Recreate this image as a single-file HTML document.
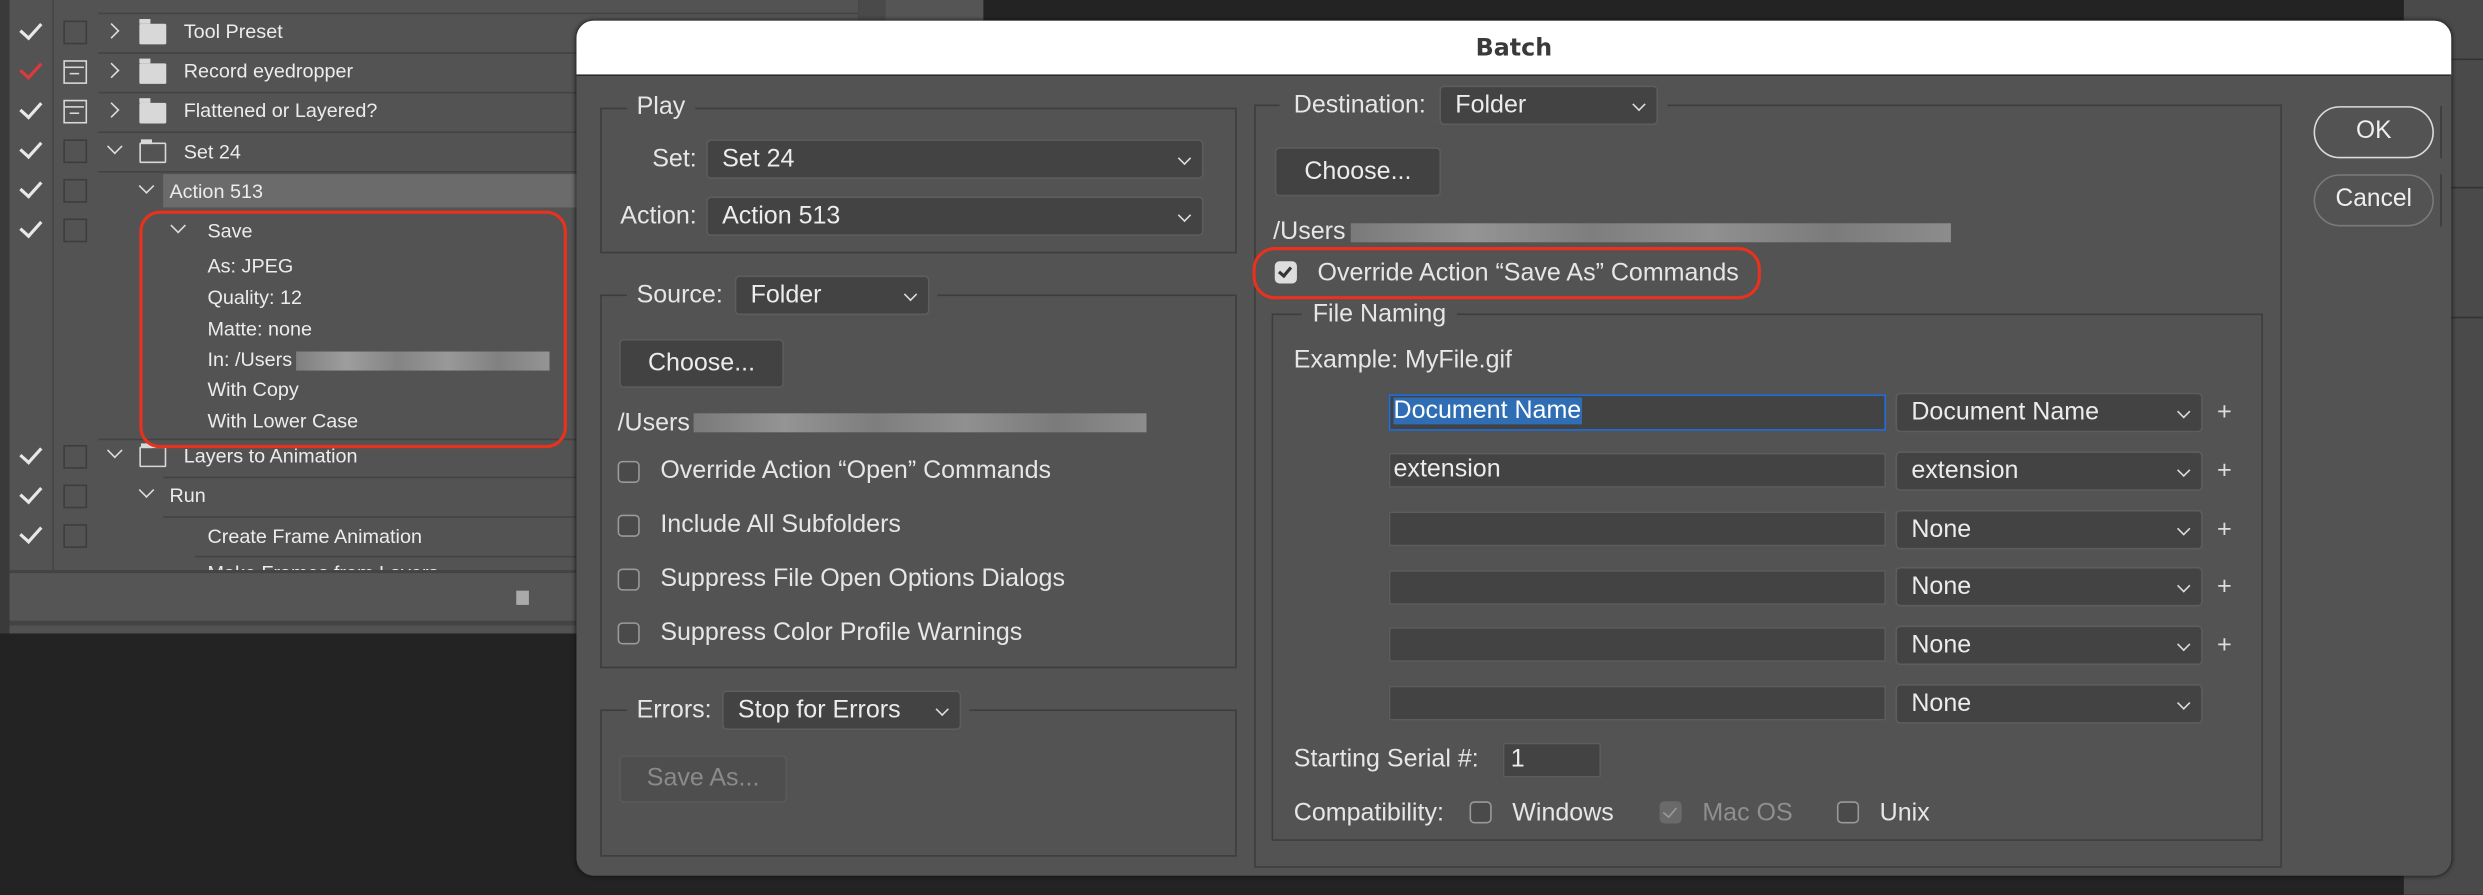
<!DOCTYPE html>
<html><head><meta charset="utf-8">
<style>
*{box-sizing:border-box;margin:0;padding:0}
html,body{width:2483px;height:894px;overflow:hidden;background:#232323}
#s{position:absolute;left:0;top:0;width:1568px;height:565px;transform:scale(1.58355);transform-origin:0 0;font-family:"Liberation Sans",sans-serif;color:#e4e4e4;background:#232323}
.a{position:absolute}
.t{position:absolute;white-space:nowrap;font-size:12.5px;line-height:16px;color:#ececec}
.d{position:absolute;white-space:nowrap;font-size:15.8px;line-height:18px;color:#e6e6e6}
.grp{position:absolute;border:1.5px solid #3d3d3d}
.sel{position:absolute;background:#434343;border:1px solid #5d5d5d;border-radius:3px;font-size:15.8px;line-height:23px;padding-left:9px;color:#ececec;white-space:nowrap}
.sel:after{content:"";position:absolute;right:8px;top:8px;width:5px;height:5px;border-right:1.2px solid #ddd;border-bottom:1.2px solid #ddd;transform:rotate(45deg)}
.btn{position:absolute;background:#424242;border:1px solid #5c5c5c;border-radius:3px;font-size:15.8px;text-align:center;color:#ececec}
.cb{position:absolute;width:14px;height:14px;border:1.2px solid #9a9a9a;border-radius:3px;background:#4a4a4a}
.fld{position:absolute;background:#434343;border:1px solid #5c5c5c;font-size:15.8px;line-height:20px;padding-left:2px;color:#ececec;white-space:nowrap}
.plus{position:absolute;font-size:16px;color:#ddd;line-height:16px}
.blur{position:absolute;height:12px;background:linear-gradient(90deg,#8a8a8a,#b0b0b0 20%,#909090 40%,#aaa 60%,#8c8c8c 80%,#a5a5a5)}
.ck{position:absolute;left:13px;width:13px;height:8px;border-left:2.3px solid #e8e8e8;border-bottom:2.3px solid #e8e8e8;transform:rotate(-48deg)}
.sq{position:absolute;left:40px;width:15px;height:15px;border:1px solid #3d3d3d}
.ln{position:absolute;height:1px;background:#434343}
.chv{position:absolute;width:7px;height:7px;border-right:1.3px solid #ddd;border-bottom:1.3px solid #ddd}
.fold{position:absolute;left:88px;width:17px;height:13px;background:#d8d8d8;border-radius:1px}
.fold:before{content:"";position:absolute;left:0;top:-3px;width:7px;height:3px;background:#d8d8d8}
.fo{background:transparent;border:1.5px solid #d8d8d8}
</style></head><body><div id="s">

<div class="a" style="left:6px;top:0;width:536px;height:400px;background:#535353"></div>
<div class="a" style="left:542px;top:0;width:17px;height:13px;background:#4a4a4a"></div>
<div class="a" style="left:559px;top:0;width:62px;height:13px;background:#555"></div>
<div class="a" style="left:0;top:0;width:6px;height:400px;background:#3a3a3a"></div>
<div class="a" style="left:33px;top:0;width:1px;height:360px;background:#444"></div>
<div class="a" style="left:103px;top:110px;width:440px;height:21px;background:#6b6b6b"></div>

<div class="ln" style="left:62px;top:8px;width:480px"></div>
<div class="ln" style="left:62px;top:33px;width:480px"></div>
<div class="ln" style="left:62px;top:58px;width:480px"></div>
<div class="ln" style="left:62px;top:83px;width:480px"></div>
<div class="ln" style="left:62px;top:108px;width:480px"></div>
<div class="ln" style="left:62px;top:277px;width:480px"></div>
<div class="ln" style="left:103px;top:301px;width:440px"></div>
<div class="ln" style="left:103px;top:326px;width:440px"></div>
<div class="ln" style="left:123px;top:351px;width:420px"></div>

<div class="ck" style="top:14px"></div>
<div class="ck" style="top:39px;border-color:#e0393a"></div>
<div class="ck" style="top:64px"></div>
<div class="ck" style="top:89px"></div>
<div class="ck" style="top:114px"></div>
<div class="ck" style="top:139px"></div>
<div class="ck" style="top:282px"></div>
<div class="ck" style="top:307px"></div>
<div class="ck" style="top:332px"></div>
<div class="sq" style="top:13px"></div>
<div class="sq" style="top:38px;border:1.3px solid #d8d8d8"><div class="a" style="left:0;top:3px;width:12px;height:1px;background:#d8d8d8"></div><div class="a" style="left:3px;top:7px;width:6px;height:1.3px;background:#d8d8d8"></div></div>
<div class="sq" style="top:63px;border:1.3px solid #d8d8d8"><div class="a" style="left:0;top:3px;width:12px;height:1px;background:#d8d8d8"></div><div class="a" style="left:3px;top:7px;width:6px;height:1.3px;background:#d8d8d8"></div></div>
<div class="sq" style="top:88px"></div>
<div class="sq" style="top:113px"></div>
<div class="sq" style="top:138px"></div>
<div class="sq" style="top:281px"></div>
<div class="sq" style="top:306px"></div>
<div class="sq" style="top:331px"></div>

<div class="chv" style="left:67px;top:16px;transform:rotate(-45deg)"></div>
<div class="chv" style="left:67px;top:41px;transform:rotate(-45deg)"></div>
<div class="chv" style="left:67px;top:66px;transform:rotate(-45deg)"></div>
<div class="chv" style="left:69px;top:89px;transform:rotate(45deg)"></div>
<div class="chv" style="left:89px;top:114px;transform:rotate(45deg)"></div>
<div class="chv" style="left:109px;top:139px;transform:rotate(45deg)"></div>
<div class="chv" style="left:69px;top:281px;transform:rotate(45deg)"></div>
<div class="chv" style="left:89px;top:306px;transform:rotate(45deg)"></div>

<div class="fold" style="top:15px"></div>
<div class="fold" style="top:40px"></div>
<div class="fold" style="top:65px"></div>
<div class="fold fo" style="top:90px"></div>
<div class="fold fo" style="top:282px"></div>

<div class="t" style="left:116px;top:12px">Tool Preset</div>
<div class="t" style="left:116px;top:37px">Record eyedropper</div>
<div class="t" style="left:116px;top:62px">Flattened or Layered?</div>
<div class="t" style="left:116px;top:88px">Set 24</div>
<div class="t" style="left:107px;top:113px">Action 513</div>
<div class="t" style="left:131px;top:138px">Save</div>
<div class="t" style="left:131px;top:160px">As: JPEG</div>
<div class="t" style="left:131px;top:180px">Quality: 12</div>
<div class="t" style="left:131px;top:200px">Matte: none</div>
<div class="t" style="left:131px;top:219px">In: /Users</div>
<div class="blur" style="left:187px;top:222px;width:160px;opacity:.8"></div>
<div class="t" style="left:131px;top:238px">With Copy</div>
<div class="t" style="left:131px;top:258px">With Lower Case</div>
<div class="t" style="left:116px;top:280px">Layers to Animation</div>
<div class="t" style="left:107px;top:305px">Run</div>
<div class="t" style="left:131px;top:331px">Create Frame Animation</div>
<div class="t" style="left:131px;top:354px;height:6px;overflow:hidden">Make Frames from Layers</div>
<div class="a" style="left:88px;top:133px;width:270px;height:150px;border:2px solid #e8321e;border-radius:13px"></div>

<div class="a" style="left:6px;top:360px;width:536px;height:2px;background:#444"></div>
<div class="a" style="left:6px;top:362px;width:536px;height:31px;background:#555"></div>
<div class="a" style="left:326px;top:373px;width:8px;height:9px;background:#aaa"></div>
<div class="a" style="left:6px;top:392px;width:536px;height:3px;background:#444"></div>
<div class="a" style="left:6px;top:395px;width:536px;height:5px;background:#525252"></div>

<div class="a" style="left:1518px;top:0;width:50px;height:565px;background:#4a4a4a"></div>
<div class="a" style="left:1518px;top:37px;width:50px;height:1px;background:#333"></div>
<div class="a" style="left:1518px;top:118px;width:50px;height:1px;background:#333"></div>
<div class="a" style="left:1518px;top:200px;width:50px;height:1px;background:#333"></div>

<div class="a" style="left:364px;top:13px;width:1184px;height:540px;background:#535353;border-radius:11px;overflow:hidden;box-shadow:0 0 3px #111">
  <div class="a" style="left:0;top:0;width:1184px;height:35px;background:#fff;border-bottom:1px solid #2a2a2a"></div>
</div>
<div class="a" style="left:364px;top:21px;width:1184px;text-align:center;font-size:15px;font-weight:bold;color:#3a3a3a;font-family:'DejaVu Sans','Liberation Sans',sans-serif">Batch</div>

<div class="grp" style="left:379px;top:68px;width:402px;height:92px"></div>
<div class="d" style="left:396px;top:59px;background:#535353;padding:0 6px">Play</div>
<div class="d" style="left:370px;top:92px;width:70px;text-align:right">Set:</div>
<div class="sel" style="left:446px;top:88px;width:314px;height:25px">Set 24</div>
<div class="d" style="left:370px;top:128px;width:70px;text-align:right">Action:</div>
<div class="sel" style="left:446px;top:124px;width:314px;height:25px">Action 513</div>

<div class="grp" style="left:379px;top:186px;width:402px;height:236px"></div>
<div class="a" style="left:396px;top:176px;width:196px;height:24px;background:#535353"></div>
<div class="d" style="left:402px;top:178px">Source:</div>
<div class="sel" style="left:464px;top:174px;width:123px;height:25px">Folder</div>
<div class="btn" style="left:391px;top:214px;width:104px;height:31px;line-height:29px">Choose...</div>
<div class="d" style="left:390px;top:259px">/Users</div>
<div class="blur" style="left:438px;top:261px;width:286px;opacity:.7"></div>
<div class="cb" style="left:390px;top:291px"></div><div class="d" style="left:417px;top:289px">Override Action “Open” Commands</div>
<div class="cb" style="left:390px;top:325px"></div><div class="d" style="left:417px;top:323px">Include All Subfolders</div>
<div class="cb" style="left:390px;top:359px"></div><div class="d" style="left:417px;top:357px">Suppress File Open Options Dialogs</div>
<div class="cb" style="left:390px;top:393px"></div><div class="d" style="left:417px;top:391px">Suppress Color Profile Warnings</div>

<div class="grp" style="left:379px;top:448px;width:402px;height:93px"></div>
<div class="a" style="left:396px;top:436px;width:216px;height:26px;background:#535353"></div>
<div class="d" style="left:402px;top:440px">Errors:</div>
<div class="sel" style="left:456px;top:436px;width:151px;height:25px">Stop for Errors</div>
<div class="btn" style="left:391px;top:477px;width:106px;height:30px;line-height:28px;color:#8a8a8a;background:#4e4e4e;border-color:#5a5a5a">Save As...</div>

<div class="grp" style="left:792px;top:66px;width:649px;height:482px"></div>
<div class="a" style="left:808px;top:54px;width:245px;height:26px;background:#535353"></div>
<div class="d" style="left:817px;top:58px">Destination:</div>
<div class="sel" style="left:909px;top:54px;width:138px;height:25px">Folder</div>
<div class="btn" style="left:805px;top:93px;width:105px;height:31px;line-height:29px">Choose...</div>
<div class="d" style="left:804px;top:138px">/Users</div>
<div class="blur" style="left:853px;top:141px;width:379px;opacity:.7"></div>
<div class="cb" style="left:805px;top:165px;background:#ddd;border-color:#ddd"><div class="a" style="left:3px;top:1px;width:5px;height:8px;border-right:2px solid #333;border-bottom:2px solid #333;transform:rotate(40deg)"></div></div>
<div class="d" style="left:832px;top:164px">Override Action “Save As” Commands</div>
<div class="a" style="left:791px;top:156px;width:321px;height:33px;border:2px solid #e8321e;border-radius:14px"></div>

<div class="grp" style="left:803px;top:198px;width:626px;height:333px"></div>
<div class="d" style="left:822px;top:190px;background:#535353;padding:0 7px">File Naming</div>
<div class="d" style="left:817px;top:219px">Example: MyFile.gif</div>

<div class="fld" style="left:877px;top:249px;width:314px;height:23px;border:1.5px solid #1f6fe0"><span style="background:#2f6db4;color:#fff">Document Name</span></div>
<div class="sel" style="left:1197px;top:248px;width:194px;height:25px">Document Name</div><div class="plus" style="left:1400px;top:253px">+</div>
<div class="fld" style="left:877px;top:286px;width:314px;height:22px">extension</div>
<div class="sel" style="left:1197px;top:285px;width:194px;height:25px">extension</div><div class="plus" style="left:1400px;top:290px">+</div>
<div class="fld" style="left:877px;top:323px;width:314px;height:22px"></div>
<div class="sel" style="left:1197px;top:322px;width:194px;height:25px">None</div><div class="plus" style="left:1400px;top:327px">+</div>
<div class="fld" style="left:877px;top:360px;width:314px;height:22px"></div>
<div class="sel" style="left:1197px;top:358px;width:194px;height:25px">None</div><div class="plus" style="left:1400px;top:363px">+</div>
<div class="fld" style="left:877px;top:396px;width:314px;height:22px"></div>
<div class="sel" style="left:1197px;top:395px;width:194px;height:25px">None</div><div class="plus" style="left:1400px;top:400px">+</div>
<div class="fld" style="left:877px;top:433px;width:314px;height:22px"></div>
<div class="sel" style="left:1197px;top:432px;width:194px;height:25px">None</div>

<div class="d" style="left:817px;top:471px">Starting Serial #:</div>
<div class="fld" style="left:949px;top:469px;width:62px;height:22px;padding-left:4px">1</div>
<div class="d" style="left:817px;top:505px">Compatibility:</div>
<div class="cb" style="left:928px;top:506px"></div><div class="d" style="left:955px;top:505px">Windows</div>
<div class="cb" style="left:1048px;top:506px;background:#6a6a6a;border-color:#6a6a6a"><div class="a" style="left:3px;top:1px;width:5px;height:8px;border-right:1.8px solid #9a9a9a;border-bottom:1.8px solid #9a9a9a;transform:rotate(40deg)"></div></div><div class="d" style="left:1075px;top:505px;color:#8f8f8f">Mac OS</div>
<div class="cb" style="left:1160px;top:506px"></div><div class="d" style="left:1187px;top:505px">Unix</div>

<div class="a" style="left:1461px;top:67px;width:76px;height:33px;border:1.5px solid #dcdcdc;border-radius:17px;text-align:center;line-height:30px;font-size:15.5px;color:#eee">OK</div>
<div class="a" style="left:1461px;top:110px;width:76px;height:33px;border:1.5px solid #7a7a7a;border-radius:17px;text-align:center;line-height:30px;font-size:15.5px;color:#eee">Cancel</div>
<div class="a" style="left:1541px;top:67px;width:1px;height:33px;background:#3a3a3a"></div>
<div class="a" style="left:1541px;top:110px;width:1px;height:33px;background:#3a3a3a"></div>

</div></body></html>
